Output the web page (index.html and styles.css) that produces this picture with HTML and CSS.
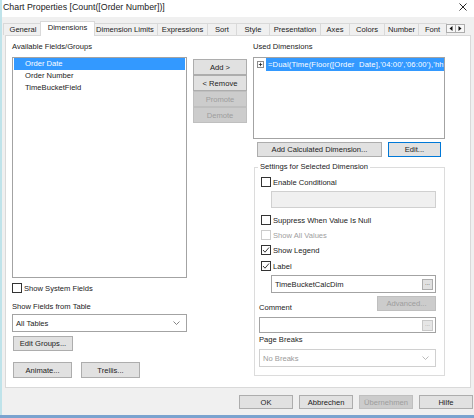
FILE: index.html
```html
<!DOCTYPE html>
<html>
<head>
<meta charset="utf-8">
<link rel="stylesheet" href="styles.css">
</head>
<body>
<div class="window">
  <div class="titlebar">
    <span class="title">Chart Properties [Count([Order Number])]</span>
    <svg class="close" width="8" height="8" viewBox="0 0 8 8"><path d="M0.5 0.5 L7.5 7.5 M7.5 0.5 L0.5 7.5" stroke="#111" stroke-width="0.9" fill="none"/></svg>
  </div>
  <div class="tabs">
    <div class="tab w-general">General</div>
    <div class="tab sel w-dims">Dimensions</div>
    <div class="tab w-limits">Dimension Limits</div>
    <div class="tab w-expr">Expressions</div>
    <div class="tab w-sort">Sort</div>
    <div class="tab w-style">Style</div>
    <div class="tab w-pres">Presentation</div>
    <div class="tab w-axes">Axes</div>
    <div class="tab w-colors">Colors</div>
    <div class="tab w-number">Number</div>
    <div class="tab w-font">Font</div>
    <div class="tab-scroll">
      <div class="arrow"><svg width="4" height="5" viewBox="0 0 4 5"><path d="M3.5 0 L0.5 2.5 L3.5 5 Z" fill="#111"/></svg></div>
      <div class="arrow"><svg width="4" height="5" viewBox="0 0 4 5"><path d="M0.5 0 L3.5 2.5 L0.5 5 Z" fill="#111"/></svg></div>
    </div>
  </div>
  <div class="panel">
    <div class="col-left">
      <div class="label-row">Available Fields/Groups</div>
      <div class="listbox list-fields">
        <div class="item selected">Order Date</div>
        <div class="item">Order Number</div>
        <div class="item">TimeBucketField</div>
      </div>
      <div class="check-row mt4">
        <span class="cb"></span><span>Show System Fields</span>
      </div>
      <div class="label-row mt7">Show Fields from Table</div>
      <div class="combo mt1">
        <span>All Tables</span>
        <svg width="7" height="4" viewBox="0 0 7 4"><path d="M0.5 0.5 L3.5 3.5 L6.5 0.5" stroke="#666" stroke-width="0.8" fill="none"/></svg>
      </div>
      <button class="btn btn-edit-groups">Edit Groups...</button>
      <div class="btn-row-left">
        <button class="btn btn-small">Animate...</button>
        <button class="btn btn-small">Trellis...</button>
      </div>
    </div>
    <div class="col-mid">
      <button class="btn btn-mid">Add &gt;</button>
      <button class="btn btn-mid mt5">&lt; Remove</button>
      <button class="btn btn-mid disabled mt7">Promote</button>
      <button class="btn btn-mid disabled mt3">Demote</button>
    </div>
    <div class="col-right">
      <div class="label-row">Used Dimensions</div>
      <div class="listbox list-used">
        <div class="used-item">
          <svg class="plus" width="7" height="7" viewBox="0 0 7 7"><rect x="0.5" y="0.5" width="6" height="6" fill="#fff" stroke="#8c8c8c"/><path d="M1.8 3.5 H5.2 M3.5 1.8 V5.2" stroke="#222" stroke-width="0.8"/></svg>
          <span class="used-text">=Dual(Time(Floor([Order&nbsp; Date],'04:00','06:00'),'hh')</span>
        </div>
      </div>
      <div class="btn-row-right">
        <button class="btn btn-calc">Add Calculated Dimension...</button>
        <button class="btn btn-editdim default">Edit...</button>
      </div>
      <fieldset class="group">
        <legend>Settings for Selected Dimension</legend>
        <div class="check-row g-row mt3"><span class="cb"></span><span>Enable Conditional</span></div>
        <div class="textbox disabled-box cond-box mt3"></div>
        <div class="check-row g-row mt6"><span class="cb"></span><span>Suppress When Value Is Null</span></div>
        <div class="check-row g-row mt3 dis"><span class="cb"></span><span>Show All Values</span></div>
        <div class="check-row g-row mt3"><span class="cb"><svg width="8" height="8" viewBox="0 0 8 8"><path d="M1 4 L3 6.2 L7 1.5" stroke="#222" stroke-width="0.9" fill="none"/></svg></span><span>Show Legend</span></div>
        <div class="check-row g-row mt4"><span class="cb"><svg width="8" height="8" viewBox="0 0 8 8"><path d="M1 4 L3 6.2 L7 1.5" stroke="#222" stroke-width="0.9" fill="none"/></svg></span><span>Label</span></div>
        <div class="textbox label-box mt3">
          <span class="tb-text">TimeBucketCalcDim</span>
          <span class="dots">...</span>
        </div>
        <div class="comment-row mt3">
          <span class="comment-label">Comment</span>
          <button class="btn btn-adv disabled">Advanced...</button>
        </div>
        <div class="textbox comment-box mt3">
          <span class="tb-text"></span>
          <span class="dots dots-dis">...</span>
        </div>
        <div class="label-row pb-label mt1">Page Breaks</div>
        <div class="combo combo-dis mt3 pb-combo">
          <span>No Breaks</span>
          <svg width="7" height="4" viewBox="0 0 7 4"><path d="M0.5 0.5 L3.5 3.5 L6.5 0.5" stroke="#aaa" stroke-width="0.8" fill="none"/></svg>
        </div>
      </fieldset>
    </div>
  </div>
  <div class="footer">
    <button class="btn btn-foot">OK</button>
    <button class="btn btn-foot">Abbrechen</button>
    <button class="btn btn-foot disabled">Übernehmen</button>
    <button class="btn btn-foot">Hilfe</button>
  </div>
</div>
<div class="taskbar"></div>
</body>
</html>
```

FILE: styles.css
```css
html, body {
  margin: 0;
  padding: 0;
}
body {
  width: 474px;
  height: 418px;
  overflow: hidden;
  background: #f0f0f0;
  font-family: "Liberation Sans", Arial, sans-serif;
  font-size: 7.6px;
  color: #222;
}
* { box-sizing: border-box; }

.window {
  display: flex;
  flex-direction: column;
  height: 415px;
  border-left: 2px solid #bfe3ea;
}

.titlebar {
  height: 17px;
  background: #fff;
  display: flex;
  align-items: flex-start;
  justify-content: space-between;
  padding: 2px 7px 0 1px;
}
.title {
  font-size: 8.8px;
  line-height: 11px;
  color: #222;
}
.close { margin-top: 1px; }

.tabs {
  height: 18px;
  display: flex;
  align-items: flex-end;
  padding-left: 1px;
}
.tab {
  height: 12px;
  border: 1px solid #d9d9d9;
  border-bottom: none;
  margin-right: -1px;
  background: #f0f0f0;
  text-align: center;
  line-height: 11px;
  white-space: nowrap;
  overflow: hidden;
}
.tab.sel {
  height: 15px;
  margin: 0 -3px -1px -2px;
  background: #fff;
  position: relative;
  z-index: 1;
  line-height: 12px;
}
.w-general { width: 40px; }
.w-dims { width: 55px; }
.w-limits { width: 66px; }
.w-expr { width: 51px; }
.w-sort { width: 30px; }
.w-style { width: 34px; }
.w-pres { width: 52px; }
.w-axes { width: 30px; }
.w-colors { width: 36px; }
.w-number { width: 35px; }
.w-font { width: 29px; }

.tab-scroll {
  display: flex;
  margin: 0 0 2px 0;
}
.arrow {
  width: 10px;
  height: 9px;
  border: 1px solid #adadad;
  background: #f7f7f7;
  display: flex;
  align-items: center;
  justify-content: center;
  margin-right: -1px;
}

.panel {
  margin-left: 3px;
  width: 466px;
  height: 353px;
  border: 1px solid #d9d9d9;
  background: #fff;
  display: flex;
  padding-left: 6px;
}

.col-left {
  width: 175px;
  padding-top: 5px;
  display: flex;
  flex-direction: column;
}
.col-mid {
  width: 54px;
  margin-left: 6px;
  padding-top: 23px;
  display: flex;
  flex-direction: column;
}
.col-right {
  width: 192px;
  margin-left: 6px;
  padding-top: 5px;
  display: flex;
  flex-direction: column;
}

.label-row {
  height: 12px;
  line-height: 12px;
  white-space: nowrap;
}

.listbox {
  border: 1px solid #a3a3a3;
  background: #fff;
  overflow: hidden;
  margin-top: 4px;
}
.list-fields {
  height: 221px;
  padding: 0 1px;
}
.item {
  height: 12px;
  line-height: 12px;
  padding-left: 11px;
  white-space: nowrap;
}
.item.selected {
  background: #3399ff;
  color: #fff;
}

.list-used {
  height: 82px;
}
.used-item {
  display: flex;
  align-items: center;
  height: 13px;
  white-space: nowrap;
  padding-left: 3px;
}
.plus { flex: none; }
.used-text {
  flex: none;
  margin-left: 2px;
  padding-left: 2px;
  width: 179px;
  height: 13px;
  line-height: 13px;
  background: #3399ff;
  color: #fff;
  overflow: hidden;
  letter-spacing: 0.15px;
}

.check-row {
  display: flex;
  align-items: center;
  height: 12px;
  gap: 2px;
  white-space: nowrap;
}
.cb {
  width: 10px;
  height: 10px;
  border: 1px solid #333;
  background: #fff;
  display: flex;
  align-items: center;
  justify-content: center;
  flex: none;
}
.check-row.dis { color: #a0a0a0; }
.check-row.dis .cb { border-color: #cccccc; }

.mt1 { margin-top: 1px; }
.mt3 { margin-top: 3px; }
.mt4 { margin-top: 4px; }
.mt5 { margin-top: 5px; }
.mt6 { margin-top: 6px; }
.mt7 { margin-top: 7px; }

.combo {
  height: 18px;
  border: 1px solid #a3a3a3;
  background: #fff;
  display: flex;
  align-items: center;
  justify-content: space-between;
  padding: 0 6px 0 3px;
}
.combo-dis {
  border-color: #d0d0d0;
  color: #9a9a9a;
}

.btn {
  font: inherit;
  color: #222;
  padding: 0;
  margin: 0;
  border: 1px solid #adadad;
  background: #e1e1e1;
  display: flex;
  align-items: center;
  justify-content: center;
  white-space: nowrap;
}
.btn.disabled {
  background: #cccccc;
  border-color: #bfbfbf;
  color: #9d9d9d;
}
.btn.default {
  border-color: #0078d7;
}

.btn-edit-groups {
  margin-top: 4px;
  width: 60px;
  height: 15px;
  margin-left: 1px;
}
.btn-row-left {
  display: flex;
  gap: 9px;
  margin-top: 11px;
  margin-left: 1px;
}
.btn-small {
  width: 59px;
  height: 16px;
}
.btn-mid {
  width: 54px;
  height: 16px;
}

.btn-row-right {
  display: flex;
  gap: 6px;
  margin-top: 3px;
  padding-left: 4px;
}
.btn-calc { width: 125px; height: 15px; }
.btn-editdim { width: 53px; height: 15px; }

.group {
  margin: 4px 0 0 1px;
  width: 191px;
  padding: 0 0 8px 0;
  border: 1px solid #dcdcdc;
  min-width: 0;
}
.group legend {
  margin-left: 3px;
  padding: 0 2px;
  height: 12px;
  line-height: 12px;
}
.g-row { padding-left: 6px; }

.textbox {
  border: 1px solid #a3a3a3;
  background: #fff;
  display: flex;
  align-items: center;
  justify-content: space-between;
  padding: 0 2px 0 3px;
}
.disabled-box {
  background: #f0f0f0;
  border-color: #d0d0d0;
}
.cond-box {
  margin-left: 16px;
  width: 165px;
  height: 17px;
}
.label-box {
  margin-left: 16px;
  width: 165px;
  height: 18px;
}
.dots {
  width: 11px;
  height: 11px;
  border: 1px solid #adadad;
  background: #e1e1e1;
  font-size: 6px;
  line-height: 7px;
  text-align: center;
  color: #333;
}
.dots-dis {
  background: #e6e6e6;
  border-color: #c8c8c8;
  color: #999;
}
.comment-row {
  height: 18px;
  display: flex;
  justify-content: space-between;
  padding: 0 8px 0 4px;
}
.comment-label {
  align-self: flex-end;
  line-height: 12px;
}
.btn-adv {
  width: 59px;
  height: 15px;
}
.comment-box {
  margin-left: 4px;
  width: 177px;
  height: 16px;
}
.pb-label { margin-left: 4px; }
.pb-combo {
  margin-left: 4px;
  width: 177px;
}

.footer {
  height: 27px;
  display: flex;
  justify-content: flex-end;
  gap: 6px;
  padding: 7px 1px 0 0;
}
.btn-foot {
  width: 54px;
  height: 14px;
}

.taskbar {
  height: 3px;
  background: #7ba3cf;
}
```
